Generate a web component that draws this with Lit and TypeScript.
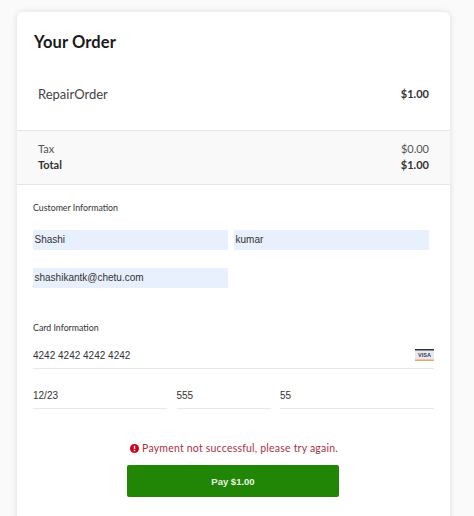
import { LitElement, html, css } from "lit";
import { customElement } from "lit/decorators.js";

@customElement("app-root")
export class AppRoot extends LitElement {
  static styles = css`
    :host { display: block; height: 516px; overflow: hidden; background: #fafafa; padding: 12px 24px 0 17px; box-sizing: border-box; font-family: "Lato", "Liberation Sans", sans-serif; color: #222; }
    .card { background: #fff; border-radius: 6px 6px 0 0; box-shadow: 0 0 6px rgba(0,0,0,.12); height: 520px; }
    h1 { margin: 0; padding: 20px 0 0 17px; font-size: 16.5px; line-height: 20px; font-weight: 700; color: #1a1a1a; letter-spacing: .1px; }
    .item { display: flex; justify-content: space-between; align-items: center; height: 78px; padding: 6px 21px 0 21px; box-sizing: border-box; font-size: 13px; color: #444; }
    .item b { font-size: 11px; font-weight: 700; color: #333; margin-top: -1px; }
    .summary { height: 55px; box-sizing: border-box; border-top: 1px solid #e6e6e6; border-bottom: 1px solid #e6e6e6; background: #f9f9f9; padding: 10px 21px 0 21px; font-size: 11px; line-height: 16px; color: #555; }
    .row { display: flex; justify-content: space-between; }
    .row.total { font-weight: 700; color: #333; }
    .section { padding: 0 16px; }
    .label { font-size: 8.8px; line-height: 12px; color: #333; }
    .customer { padding-top: 17px; }
    .fields { display: grid; grid-template-columns: 195px 195px; gap: 18px 6px; margin-top: 16px; }
    .fill { height: 20px; background: #e8f0fe; padding-left: 1.5px; font: 10px/19px "Liberation Sans", sans-serif; color: #333; }
    .payment { padding-top: 34px; }
    .line { display: flex; justify-content: space-between; align-items: center; height: 25px; margin-top: 9px; border-bottom: 1px solid #e8e8e8; font: 10px/14px "Liberation Sans", sans-serif; color: #333; }
    .card-number { width: 401px; }
    .exp { display: grid; grid-template-columns: 134px 94px 154px; gap: 9.5px; width: 401px; }
    .exp .line { margin-top: 11px; height: 24px; padding-top: 4px; }
    svg { display: block; }
    .visa { width: 19px; height: 12px; margin-top: -1px; }
    .error { display: flex; justify-content: center; align-items: center; gap: 3px; margin: 32px 0 0; padding-left: 1px; height: 14px; font-size: 10.5px; color: #a83246; letter-spacing: .21px; }
    .error svg { width: 9px; height: 9px; }
    .pay { display: block; width: 212px; height: 32px; margin: 10px 0 0 110px; border: 0; border-radius: 2px; background: #218505; color: #e9f5e4; font: 700 9.5px "Liberation Sans", sans-serif; }
  `;

  render() {
    return html`
      <div class="card">
        <h1>Your Order</h1>
        <div class="item"><span>RepairOrder</span><b>$1.00</b></div>
        <div class="summary">
          <div class="row"><span>Tax</span><span>$0.00</span></div>
          <div class="row total"><span>Total</span><span>$1.00</span></div>
        </div>
        <div class="section customer">
          <div class="label">Customer Information</div>
          <div class="fields">
            <div class="fill">Shashi</div>
            <div class="fill">kumar</div>
            <div class="fill">shashikantk@chetu.com</div>
          </div>
        </div>
        <div class="section payment">
          <div class="label">Card Information</div>
          <div class="line card-number">
            <span>4242 4242 4242 4242</span>
            <svg class="visa" viewBox="0 0 19 12">
              <rect width="19" height="12" fill="#e9e9ec"/>
              <rect width="19" height="1.5" fill="#2b3440"/>
              <rect y="10.5" width="19" height="1.5" fill="#eaa467"/>
              <text x="9.5" y="8.3" text-anchor="middle" font-family="Liberation Sans" font-size="5.5" font-weight="700" fill="#2b3a63">VISA</text>
            </svg>
          </div>
          <div class="exp">
            <div class="line">12/23</div>
            <div class="line">555</div>
            <div class="line">55</div>
          </div>
          <div class="error">
            <svg viewBox="0 0 10 10"><circle cx="5" cy="5" r="5" fill="#d0021b"/><rect x="4.2" y="2" width="1.6" height="3.8" fill="#fff"/><rect x="4.2" y="6.6" width="1.6" height="1.5" fill="#fff"/></svg>
            <span>Payment not successful, please try again.</span>
          </div>
        </div>
        <button class="pay">Pay $1.00</button>
      </div>
    `;
  }
}
